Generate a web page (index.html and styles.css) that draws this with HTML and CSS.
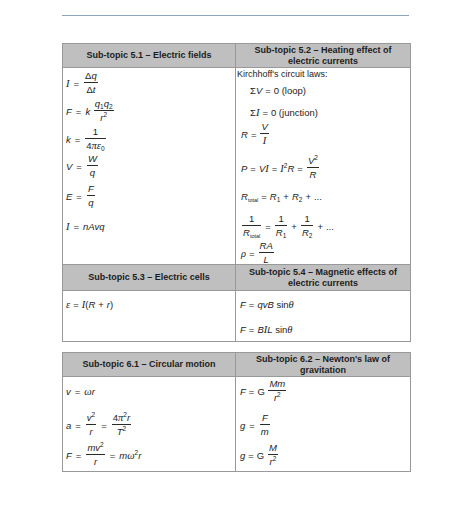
FILE: index.html
```html
<!DOCTYPE html>
<html>
<head>
<meta charset="utf-8">
<link rel="stylesheet" href="styles.css">
</head>
<body>
<div class="page">
  <div class="rule"></div>

  <div class="tbl t1">
    <div class="hd">Sub-topic 5.1 – Electric fields</div>
    <div class="hd">Sub-topic 5.2 – Heating effect of<br>electric currents</div>

    <div class="cell c-left big">
      <div class="eq m4"><span class="I">I</span><span class="op wide">=</span><span class="fr"><span class="n">Δ<i>q</i></span><span class="d">Δ<i>t</i></span></span></div>
      <div class="eq m6"><i>F</i><span class="op wide">=</span><i>k</i>&nbsp;<span class="fr"><span class="n"><i>q</i><sub>1</sub><i>q</i><sub>2</sub></span><span class="d"><i>r</i><sup>2</sup></span></span></div>
      <div class="eq m6"><i>k</i><span class="op wide">=</span><span class="fr"><span class="n">1</span><span class="d">4<span class="g">πε</span><sub>0</sub></span></span></div>
      <div class="eq m5"><i>V</i><span class="op wide">=</span><span class="fr"><span class="n"><i>W</i></span><span class="d"><i>q</i></span></span></div>
      <div class="eq m8"><i>E</i><span class="op wide">=</span><span class="fr"><span class="n"><i>F</i></span><span class="d"><i>q</i></span></span></div>
      <div class="eq m8"><span class="I">I</span><span class="op wide">=</span><i>nAvq</i></div>
    </div>

    <div class="cell c-right big">
      <div class="txt">Kirchhoff's circuit laws:</div>
      <div class="eq mneg indent">Σ<i>V</i><span class="op">=</span>0 (loop)</div>
      <div class="eq m0 indent">Σ<span class="I">I</span><span class="op">=</span>0 (junction)</div>
      <div class="eq m0 pad"><i>R</i><span class="op">=</span><span class="fr"><span class="n"><i>V</i></span><span class="d"><span class="I">I</span></span></span></div>
      <div class="eq m12 pad"><i>P</i><span class="op">=</span><i>V</i><span class="I">I</span><span class="op">=</span><span class="grp"><span class="I">I</span><sup>2</sup><i>R</i></span><span class="op">=</span><span class="fr"><span class="n"><i>V</i><sup>2</sup></span><span class="d"><i>R</i></span></span></div>
      <div class="eq m6 pad"><span class="grp"><i>R</i><sub class="tot">total</sub></span><span class="op">=</span><span class="grp"><i>R</i><sub>1</sub></span><span class="op">+</span><span class="grp"><i>R</i><sub>2</sub></span><span class="op">+</span>...</div>
      <div class="eq m8 pad"><span class="fr"><span class="n">1</span><span class="d"><i>R</i><sub class="tot">total</sub></span></span><span class="op">=</span><span class="fr"><span class="n">1</span><span class="d"><i>R</i><sub>1</sub></span></span><span class="op">+</span><span class="fr"><span class="n">1</span><span class="d"><i>R</i><sub>2</sub></span></span><span class="op">+</span>...</div>
      <div class="eq m5 pad"><span class="g">ρ</span><span class="op">=</span><span class="fr"><span class="n"><i>RA</i></span><span class="d"><i>L</i></span></span></div>
    </div>

    <div class="hd">Sub-topic 5.3 – Electric cells</div>
    <div class="hd">Sub-topic 5.4 – Magnetic effects of<br>electric currents</div>

    <div class="cell c-left small">
      <div class="eq m2"><span class="g">ε</span><span class="op">=</span><span class="I">I</span>(<i>R</i><span class="op">+</span><i>r</i>)</div>
    </div>
    <div class="cell c-right small">
      <div class="eq m2 pad2"><i>F</i><span class="op">=</span><i>qvB</i>&nbsp;sin<span class="g">θ</span></div>
      <div class="eq m3 pad2"><i>F</i><span class="op">=</span><i>B</i><span class="I">I</span><i>L</i>&nbsp;sin<span class="g">θ</span></div>
    </div>
  </div>

  <div class="tbl t2">
    <div class="hd">Sub-topic 6.1 – Circular motion</div>
    <div class="hd">Sub-topic 6.2 – Newton's law of<br>gravitation</div>

    <div class="cell c-left mid">
      <div class="eq m3"><i>v</i><span class="op wide">=</span><span class="g">ω</span><i>r</i></div>
      <div class="eq m12"><i>a</i><span class="op wide">=</span><span class="fr"><span class="n"><i>v</i><sup>2</sup></span><span class="d"><i>r</i></span></span><span class="op wide">=</span><span class="fr"><span class="n">4<span class="g">π</span><sup>2</sup><i>r</i></span><span class="d"><i>T</i><sup>2</sup></span></span></div>
      <div class="eq m8"><i>F</i><span class="op wide">=</span><span class="fr"><span class="n"><i>mv</i><sup>2</sup></span><span class="d"><i>r</i></span></span><span class="op wide">=</span><span class="grp"><i>m</i><span class="g">ω</span><sup>2</sup><i>r</i></span></div>
    </div>
    <div class="cell c-right mid">
      <div class="eq m3 pad2"><i>F</i><span class="op">=</span>G&nbsp;<span class="fr"><span class="n"><i>Mm</i></span><span class="d"><i>r</i><sup>2</sup></span></span></div>
      <div class="eq m12 pad2"><i>g</i><span class="op wide">=</span><span class="fr"><span class="n"><i>F</i></span><span class="d"><i>m</i></span></span></div>
      <div class="eq m8 pad2"><i>g</i><span class="op">=</span>G&nbsp;<span class="fr"><span class="n"><i>M</i></span><span class="d"><i>r</i><sup>2</sup></span></span></div>
    </div>
  </div>
</div>
</body>
</html>
```

FILE: styles.css
```css
html, body {
  margin: 0;
  padding: 0;
  background: #ffffff;
}

body {
  font-family: "Liberation Sans", Arial, sans-serif;
  color: #1c1c1c;
  font-size: 9px;
}

.page {
  padding-left: 62px;
  padding-top: 15px;
}

.rule {
  width: 347px;
  height: 1px;
  background: #8ea5b7;
}

.tbl {
  display: grid;
  grid-template-columns: 172px 174px;
  gap: 1px;
  background: #999999;
  border: 1px solid #999999;
  width: max-content;
}

.t1 {
  margin-top: 27px;
  grid-template-rows: 23px 196px 25px 50px;
}

.t2 {
  margin-top: 10px;
  grid-template-rows: 23px 94px;
}

.hd {
  background: #bfbfbf;
  font-weight: bold;
  font-size: 9px;
  line-height: 11px;
  text-align: center;
  display: flex;
  align-items: center;
  justify-content: center;
}

.cell {
  background: #ffffff;
  display: flex;
  flex-direction: column;
  overflow: hidden;
}

.c-left {
  padding-left: 3px;
}

.c-right {
  padding-left: 1px;
}

.eq {
  height: 22px;
  display: flex;
  align-items: center;
  white-space: nowrap;
  font-size: 9.5px;
}

.grp {
  white-space: nowrap;
}

.txt {
  height: 12px;
  line-height: 12px;
  font-size: 9px;
}

.indent { padding-left: 13px; }
.pad { padding-left: 4px; }
.pad2 { padding-left: 3px; }

.mneg { margin-top: -1px; }
.m0 { margin-top: 0; }
.m2 { margin-top: 2px; }
.m3 { margin-top: 3px; }
.m4 { margin-top: 4px; }
.m5 { margin-top: 5px; }
.m6 { margin-top: 6px; }
.m8 { margin-top: 8px; }
.m12 { margin-top: 12px; }

i {
  font-style: italic;
}

.I {
  font-family: "Liberation Serif", "Times New Roman", serif;
  font-style: italic;
  font-size: 10.5px;
}

.g {
  font-family: "Liberation Serif", "Times New Roman", serif;
  font-style: italic;
  font-size: 10.5px;
}

.op {
  margin: 0 3px;
  font-style: normal;
}

.op.wide {
  margin: 0 4px;
}

.fr {
  display: inline-flex;
  flex-direction: column;
  align-items: stretch;
  text-align: center;
  margin: 0 1px;
}

.fr .n {
  line-height: 13px;
  padding: 0 1px;
  border-bottom: 1px solid #2a2a2a;
}

.fr .d {
  line-height: 14px;
  padding: 0 1px;
}

sub, sup {
  font-size: 6.5px;
  line-height: 0;
  font-style: normal;
}

sub {
  vertical-align: -2px;
}

sup {
  vertical-align: 4px;
}

sub.tot {
  font-size: 5.5px;
}
```
